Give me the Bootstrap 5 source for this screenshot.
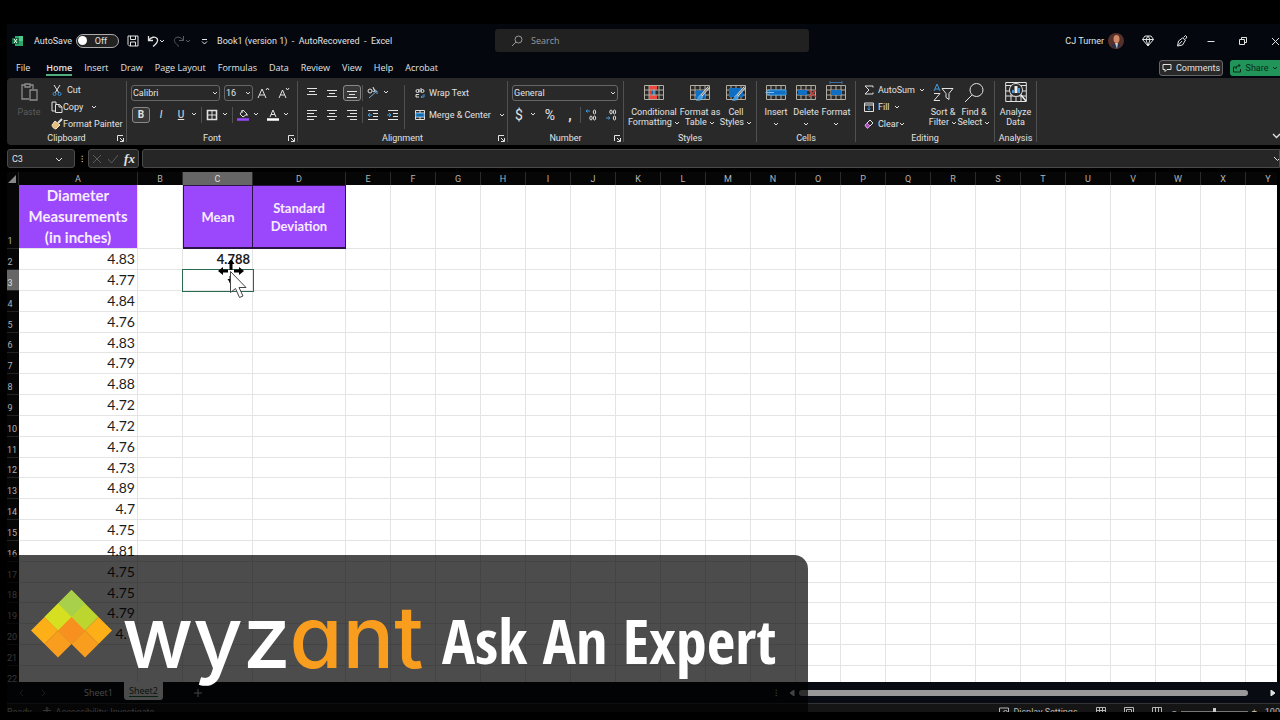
<!DOCTYPE html>
<html lang="en">
<head>
<meta charset="utf-8">
<meta name="viewport" content="width=device-width, initial-scale=1">
<title>Book1 (version 1) - AutoRecovered - Excel</title>
<link href="https://cdn.jsdelivr.net/npm/bootstrap@5.3.0/dist/css/bootstrap.min.css" rel="stylesheet">
<style>
  body{background:#000;color:#e2e2e2;font:400 9px/12px Roboto,"Open Sans",sans-serif;height:100vh;overflow:hidden}
  button,input,select{font:inherit;color:inherit;background:none;border:0;padding:0}
  button{display:inline-flex;align-items:center;justify-content:center;white-space:nowrap}
  svg{fill:none;stroke:currentColor;stroke-width:1;flex:none;display:block}
  svg.flat{stroke:none}
  .i10{width:10px;height:10px}.i12{width:12px;height:12px}.i14{width:14px;height:14px}.i16{width:16px;height:16px}.i22{width:22px;height:22px}
  .caret{width:6px;height:6px}
  .m10{margin-left:10px}.m18{margin-left:18px}.m22{margin-left:22px}
  .app{height:calc(100vh - 8px);padding-top:24px}
  .titlebar{height:33px;background:#04070e;padding-left:5px;margin-left:7px}
  .title-left{width:483px}
  .title-text{white-space:pre}
  .toggle{width:43px;height:14px;border:1px solid #aaa;border-radius:7px;background:#222}
  .toggle::before{content:"";width:9px;height:9px;border-radius:50%;background:#fff;margin:0 8px 0 -10px}
  .search{background:#212121;border-radius:3px;height:23px;width:314px;color:#9a9a9a;font:9px/12px "Open Sans",sans-serif}
  .avatar{width:16px;height:16px}
  .menubar{height:21px;background:#04070e;margin-left:7px;padding-left:9px;font:9px/12px "Open Sans",sans-serif;gap:12px}
  .menubar a{color:inherit;text-decoration:none;line-height:14px}
  .menubar a.on{font-weight:600;border-bottom:2px solid #4fae7b;margin-left:4px;line-height:13px;padding-top:1px}
  .cbtn{height:16px;border:1px solid #666;border-radius:3px;background:#292929;width:64px;font-family:Roboto,sans-serif}
  .sbtn{height:16px;border-radius:3px 0 0 3px;background:#21945a;color:#0a2a18;width:50px;font-family:Roboto,sans-serif;margin-left:7px}
  .ribbon{height:67px;background:#292929;margin-left:7px;border-radius:4px 0 0 4px}
  .grp{position:relative;border-right:1px solid #505050;height:61px;margin-top:3px;flex:none}
  .grp>.cap{position:absolute;bottom:-2px;left:0;right:0;text-align:center}
  .launch{position:absolute;right:2px;bottom:0;width:7px;height:7px}
  .r3{height:17px}.r2{height:22px}
  .ib{width:20px;height:16px;flex:none}
  .ib.sel{width:18px;margin:0 1px;border:1px solid #888;border-radius:3px;background:#383838}
  .glyph{font-size:14px}
  .letter{font-size:10px}
  .vs{width:1px;height:16px;background:#505050;flex:none}
  .align-left-part{width:107px;height:44px;border-right:1px solid #505050}
  .combo{height:16px;border:1px solid #666;border-radius:3px;appearance:none;padding-left:1px;background:#292929 url("data:image/svg+xml,%3Csvg xmlns='http://www.w3.org/2000/svg' width='6' height='6'%3E%3Cpath d='M1 2l2 2 2-2' fill='none' stroke='%23ddd'/%3E%3C/svg%3E") no-repeat right 1px center}
  .big{flex-direction:column;justify-content:flex-start;line-height:10px;flex:none}
  .big svg.i22{margin-bottom:4px}
  .dim{color:#5c5c5c}
  .fbar{height:27px;padding:4px 0 4px 7px}
  .fbox{height:19px;border:1px solid #4a4a4a;border-radius:3px;background:#262626}
  .sheet{margin:0 3px 0 7px;overflow:hidden;min-height:0;background:#fff}
  .gridtab{table-layout:fixed;border-collapse:separate;border-spacing:0;width:1284px;font-family:Lato,"Open Sans",sans-serif;color:#1c1c1c;font-weight:400}
  .gridtab thead th{height:13px;line-height:12px;background:#060606;color:#b4b4b4;font-family:Roboto,sans-serif;font-size:9px;font-weight:400;text-align:center;padding:0;border-right:1px solid #2b2b2b}
  .gridtab tbody th{background:#060606;color:#b0b0b0;font:9px/9px Roboto,sans-serif;text-align:center;vertical-align:bottom;padding:0 6px 2px 0;border-bottom:1px solid #222}
  .gridtab tbody td{background:#fff;border-right:1px solid #e4e4e4;border-bottom:1px solid #e4e4e4;padding:0 2px 0 0;line-height:18px;font-size:14px;text-align:right;overflow:hidden}
  .gridtab tbody tr{height:21px}
  .gridtab tbody tr:nth-child(6n){height:20px}
  .gridtab tbody tr:first-child{height:63px}
  .gridtab thead th.hot,.gridtab tbody th.hot{background:#666;color:#ddd}
  .gridtab tbody td.hd{background:#9b48fc;color:#f6ecff;font-weight:700;text-align:center;padding:0;font-size:13px}
  .gridtab tbody td.first{font-size:15px;line-height:21px}
  .gridtab tbody td.box{border:solid #2b1348;border-width:1px 1px 2px 0}
  .gridtab tbody td.box-start{border-left-width:1px}
  .gridtab tbody td.avg{font-weight:700;font-size:13px}
  .gridtab tbody td.cur{outline:1px solid #2a6b50;outline-offset:0;position:relative;overflow:visible}
  .pointer{position:absolute;left:35px;top:-10px;width:30px;height:40px}
  .sheetbar{height:21px;background:#080b11;margin-left:7px;flex:none}
  .stab{background:#fff;color:#123d28;height:18px;width:39px;border-radius:0 0 3px 3px;margin-left:10px}
  .stab span{border-bottom:1px solid #1e6b45;line-height:11px}
  .sheetbar button{font:9px/12px "Open Sans",sans-serif}
  .hscroll{width:449px;height:6px;border-radius:3px;background:#999}
  .status{height:9px;background:#151515;margin-left:7px;border-top:1px solid #333;flex:none;overflow:hidden;color:#b5b5b5}
  .status>div{height:15px}
  .zoomer{appearance:none;width:67px;height:8px;background:linear-gradient(#777,#777) center/100% 1px no-repeat}
  .zoomer::-webkit-slider-thumb{appearance:none;width:3px;height:8px;background:#ccc}
  .banner{position:absolute;left:0;bottom:0;width:808px;height:165px;background:rgba(0,0,0,.7);border-radius:0 14px 0 0;color:#fff;padding-left:31px}
  .brandmark{width:81px;height:68px;margin-top:35px}
  .wordmark{font:500 86px/84px Inter,sans-serif;font-feature-settings:"cv11";padding-left:10px;width:330px;margin-top:40px}
  .wordmark span{color:#f99d1f}
  .ask{font:700 62px/84px "Open Sans Condensed","Noto Sans Condensed","Roboto Condensed",sans-serif;margin-top:43px}
</style>
</head>
<body>
<svg width="0" height="0" class="position-absolute" aria-hidden="true">
  <symbol id="caret" viewBox="0 0 6 6"><path d="M1 2l2 2 2-2"/></symbol>
  <symbol id="launch" viewBox="0 0 7 7"><path d="M.5 6V.5H6M3 3l3 3M6.500 3v3.500H3"/></symbol>
  <symbol id="left" viewBox="0 0 12 12"><path d="M1 1.500h10M1 4.500h7M1 7.500h10M1 10.500h7"/></symbol>
  <symbol id="center" viewBox="0 0 12 12"><path d="M1 1.500h10M3 4.500h6M1 7.500h10M3 10.500h6"/></symbol>
  <symbol id="right" viewBox="0 0 12 12"><path d="M1 1.500h10M4 4.500h7M1 7.500h10M4 10.500h7"/></symbol>
  <symbol id="table" viewBox="0 0 22 22"><path d="M1.500 4.500h19v14h-19zM1.500 9h19M1.500 14h19M6 4.500v14M11 4.500v14M16 4.500v14" stroke="#b5afa3"/></symbol>
  <symbol id="brush" viewBox="0 0 22 22"><path d="M20 6l-8 9" stroke="#e8e4da" stroke-width="2.500"/><path d="M20 6l-8 9" stroke="#555"/><path d="M12 14c-3 0-2 4-5 5 3 1 7 0 6-4z" fill="#3d9be0" stroke="#8cc8f2" stroke-width=".6"/></symbol>
</svg>

<div class="app d-flex flex-column overflow-hidden">
  <header class="titlebar d-flex align-items-center flex-shrink-0">
    <div class="title-left d-flex align-items-center flex-shrink-0">
      <svg class="i12 flat" viewBox="0 0 12 12"><path d="M3 1h8v10H3z" fill="#2fa56c"/><path d="M7 1h4v5H7z" fill="#54c78e"/><path d="M0 3h7v6H0z" fill="#0f6b3d"/><path d="M2 4l3 4M5 4L2 8" stroke="#fff"/></svg>
      <label for="autosave" class="m10 me-1">AutoSave</label>
      <button id="autosave" class="toggle">Off</button>
      <button class="ms-2" aria-label="Save"><svg class="i12" viewBox="0 0 12 12"><path d="M1 1h10v10H2.500L1 9.500zM3.500 1v3.500h5V1M3.500 11V7h5v4"/></svg></button>
      <button class="ms-2" aria-label="Undo"><svg class="i12" viewBox="0 0 12 12"><path d="M1.500 1v4.500H6M1.500 5.500C4 2 8 1 10 3.500S9 9 6 11.500" stroke-width="1.300"/></svg><svg class="caret"><use href="#caret"/></svg></button>
      <button class="ms-2 dim" aria-label="Redo"><svg class="i12" viewBox="0 0 12 12"><path d="M10.500 1v4.500H6M10.500 5.500C8 2 4 1 2 3.500S3 9 6 11.500"/></svg><svg class="caret"><use href="#caret"/></svg></button>
      <button class="ms-2" aria-label="Customize"><svg class="i10" viewBox="0 0 10 10"><path d="M3 3.500h5M3 5.500l2.500 2.500L8 5.500"/></svg></button>
      <span class="ms-2 title-text">Book1 (version 1)  -  AutoRecovered  -  Excel</span>
    </div>
    <label class="search d-flex align-items-center"><svg class="i12 mx-2 ms-3" viewBox="0 0 12 12"><circle cx="7.500" cy="4.500" r="3.500"/><path d="M5 7l-4 4"/></svg><input class="w-100" value="Search" aria-label="Search"></label>
    <div class="ms-auto d-flex align-items-center flex-shrink-0">
      <span>CJ Turner</span>
      <svg class="avatar ms-1 flat" viewBox="0 0 16 16"><circle cx="8" cy="8" r="8" fill="#56302a"/><path d="M3 13c2-3 8-3 10 0a8 8 0 0 1-10 0z" fill="#26324f"/><path d="M7 10h3l-1 6z" fill="#ccc"/><ellipse cx="8.500" cy="6" rx="3" ry="4" fill="#d08a68"/></svg>
      <button class="m18" aria-label="Premium"><svg class="i12" viewBox="0 0 12 12"><path d="M3 1h6l2.500 3.500L6 11 .5 4.500zM.5 4.500h11M4 4.500L6 11l2-6.500L6 1 4 4.500"/></svg></button>
      <button class="m22" aria-label="Pen"><svg class="i12" viewBox="0 0 12 12"><path d="M1.500 11l1-5 4-3 3 2-3 5zM2 10.500L6 6M7.500 2.500l2-2 1.500 1.500-1.500 2"/></svg></button>
      <button class="m18" aria-label="Minimize"><svg class="i10" viewBox="0 0 10 10"><path d="M1.500 5.500h7"/></svg></button>
      <button class="m22" aria-label="Restore"><svg class="i10" viewBox="0 0 10 10"><path d="M1.500 3.500h5v5h-5zM3.500 3V1.500h5v5H7"/></svg></button>
      <button class="m22" aria-label="Close"><svg class="i10" viewBox="0 0 10 10"><path d="M2 2l7 7M9 2L2 9"/></svg></button>
    </div>
  </header>

  <nav class="menubar d-flex align-items-center flex-shrink-0">
    <a href="#">File</a><a href="#" class="on">Home</a><a href="#">Insert</a><a href="#">Draw</a><a href="#">Page Layout</a><a href="#">Formulas</a><a href="#">Data</a><a href="#">Review</a><a href="#">View</a><a href="#">Help</a><a href="#">Acrobat</a>
    <div class="ms-auto d-flex">
      <button class="cbtn"><svg class="i10 me-1" viewBox="0 0 10 10"><path d="M1 1.500h8v5H5L3 8.500v-2H1z"/></svg>Comments</button>
      <button class="sbtn"><svg class="i10 me-1" viewBox="0 0 10 10"><path d="M5 4H1.500v5h7V6M4 6c0-3 2-3.500 4-3.500M6.500 1L8 2.500 6.500 4"/></svg>Share<svg class="caret ms-1"><use href="#caret"/></svg></button>
    </div>
  </nav>

  <div class="ribbon d-flex flex-shrink-0">
    <section class="grp d-flex" style="width:120px">
      <button class="big dim" style="width:44px"><svg class="i22" viewBox="0 0 22 22"><path d="M7 4H4v14h7M15 8V4h-3M7 3h5v3H7zM12 9h7v10h-7z" stroke="#8d8d8d" stroke-width="1.300"/></svg><span>Paste</span></button>
      <div>
        <div class="r3 d-flex align-items-center"><button><svg class="i12 me-1" viewBox="0 0 12 12"><path d="M3 1l5 8M9 1L4 9"/><circle cx="3.500" cy="10" r="1.500" stroke="#3f8fd0"/><circle cx="8.500" cy="10" r="1.500" stroke="#3f8fd0"/></svg>Cut</button></div>
        <div class="r3 d-flex align-items-center"><button><svg class="i12" viewBox="0 0 12 12"><path d="M4 10H1V1h4v2M4.500 3.500h4l2.500 2.500v5.500H4.500zM8 3.500V6h3"/></svg>Copy<svg class="caret ms-2"><use href="#caret"/></svg></button></div>
        <div class="r3 d-flex align-items-center"><button><svg class="i12" viewBox="0 0 12 12"><path d="M11 1L7 5" stroke-width="2"/><path d="M4 3l5 4-4 4c-2 0-4-2-4-4z" fill="#e4c07b" stroke="#f4e4c0"/></svg>Format Painter</button></div>
      </div>
      <span class="cap">Clipboard</span><svg class="launch"><use href="#launch"/></svg>
    </section>

    <section class="grp ps-1 pt-1" style="width:171px">
      <div class="r2 d-flex align-items-start">
        <select class="combo" style="width:89px" aria-label="Font"><option>Calibri</option></select>
        <select class="combo ms-1" style="width:29px" aria-label="Size"><option>16</option></select>
        <button class="ib" aria-label="Grow"><svg class="i14" viewBox="0 0 14 14"><path d="M2 12L6 3l4 9M3.500 9h5M10 4l1.500-2L13 4"/></svg></button>
        <button class="ib" aria-label="Shrink"><svg class="i14" viewBox="0 0 14 14"><path d="M3 12l3.500-8L10 12M4.500 9h4M10 2l1.500 2L13 2"/></svg></button>
      </div>
      <div class="r2 d-flex align-items-start">
        <button class="ib sel fw-bold letter">B</button><button class="ib fst-italic letter">I</button><button class="ib text-decoration-underline letter">U</button>
        <svg class="caret mt-1"><use href="#caret"/></svg><span class="vs ms-1"></span>
        <button class="ib" aria-label="Borders"><svg class="i12" viewBox="0 0 12 12"><path d="M1.500 1.500h9v9h-9z" stroke-width="1.600"/><path d="M6 1v10M1 6h10"/></svg></button><svg class="caret mt-1"><use href="#caret"/></svg><span class="vs ms-1"></span>
        <button class="ib" aria-label="Fill colour"><svg class="i12" viewBox="0 0 12 12"><path d="M6 1l4 4-4 3-3-3zM5 1v3M10 5v2"/><path d="M0 10.500h12" stroke="#9b48fc" stroke-width="2.500"/></svg></button><svg class="caret mt-1"><use href="#caret"/></svg>
        <button class="ib ms-1" aria-label="Font colour"><svg class="i12" viewBox="0 0 12 12"><path d="M3 8l3-7 3 7M4 5.500h4"/><path d="M0 10.500h12" stroke="#fff" stroke-width="2.500"/></svg></button><svg class="caret mt-1"><use href="#caret"/></svg>
      </div>
      <span class="cap">Font</span><svg class="launch"><use href="#launch"/></svg>
    </section>

    <section class="grp d-flex pt-1" style="width:210px">
      <div class="align-left-part">
        <div class="r2 d-flex align-items-start ps-1">
          <button class="ib" aria-label="Top"><svg class="i12" viewBox="0 0 12 12"><path d="M1 1.500h10M3 4.500h6M1 7.500h10"/></svg></button>
          <button class="ib" aria-label="Middle"><svg class="i12" viewBox="0 0 12 12"><path d="M1 3.500h10M3 6.500h6M1 9.500h10"/></svg></button>
          <button class="ib sel" aria-label="Bottom"><svg class="i12" viewBox="0 0 12 12"><path d="M1 4.500h10M3 7.500h6M1 10.500h10"/></svg></button>
          <span class="vs"></span>
          <button class="ib" aria-label="Orientation"><svg class="i14" viewBox="0 0 14 14"><circle cx="4" cy="5" r="2"/><path d="M7 1l2 5M6.500 5c2 2 4-1 1.500-2"/><path d="M3 12l8-7M8 5h3v3" stroke="#7aa8cc"/></svg></button><svg class="caret mt-1"><use href="#caret"/></svg>
        </div>
        <div class="r2 d-flex align-items-start ps-1">
          <button class="ib" aria-label="Align left"><svg class="i12"><use href="#left"/></svg></button>
          <button class="ib" aria-label="Align center"><svg class="i12"><use href="#center"/></svg></button>
          <button class="ib" aria-label="Align right"><svg class="i12"><use href="#right"/></svg></button>
          <span class="vs"></span>
          <button class="ib" aria-label="Outdent"><svg class="i12" viewBox="0 0 12 12"><path d="M1 1.500h10M6 4.500h5M6 7.500h5M1 10.500h10"/><path d="M5 6H1M3 4L1 6l2 2" stroke="#3f9be0"/></svg></button>
          <button class="ib" aria-label="Indent"><svg class="i12" viewBox="0 0 12 12"><path d="M1 1.500h10M6 4.500h5M6 7.500h5M1 10.500h10"/><path d="M0 6h4M2 4l2 2-2 2" stroke="#3f9be0"/></svg></button>
        </div>
      </div>
      <div class="m10">
        <div class="r2 d-flex align-items-start"><button class="ib w-auto"><svg class="i10 me-1" viewBox="0 0 10 10"><circle cx="2.500" cy="3" r="1.500"/><path d="M4 1v3.500M6 0v4.500M4 9H1V6.500h3"/><circle cx="7.500" cy="3" r="1.500"/><path d="M6 9h3V6M7.500 7.500L6 9l1.500 1.500" stroke="#3f9be0"/></svg>Wrap Text</button></div>
        <div class="r2 d-flex align-items-start"><button class="ib w-auto"><svg class="i10 me-1" viewBox="0 0 10 10"><path d="M.5.500h9v9h-9zM.5 3h9M.5 7h9M5 0v3M5 7v3"/><path d="M1 3.500h8v3H1z" fill="#1668a8" stroke="#3f9be0"/></svg>Merge &amp; Center<svg class="caret ms-2"><use href="#caret"/></svg></button></div>
      </div>
      <span class="cap">Alignment</span><svg class="launch"><use href="#launch"/></svg>
    </section>

    <section class="grp pt-1 ps-1" style="width:116px">
      <div class="r2 d-flex align-items-start"><select class="combo" style="width:106px" aria-label="Number format"><option>General</option></select></div>
      <div class="r2 d-flex align-items-start">
        <button class="ib glyph" style="width:14px">$</button><svg class="caret mt-1 ms-1"><use href="#caret"/></svg>
        <button class="ib glyph ms-1">%</button><button class="ib glyph fw-bold">,</button><span class="vs"></span>
        <button class="ib" aria-label="More decimals"><svg class="i12" viewBox="0 0 12 12"><path d="M5 2H1M2.500.500L1 2l1.500 1.500" stroke="#3f9be0"/><ellipse cx="9.500" cy="3" rx="1.200" ry="2"/><ellipse cx="6" cy="9" rx="1.200" ry="2"/><ellipse cx="9.500" cy="9" rx="1.200" ry="2"/></svg></button>
        <button class="ib" aria-label="Fewer decimals"><svg class="i12" viewBox="0 0 12 12"><path d="M1 9h4M3.500 7.500L5 9l-1.500 1.500" stroke="#3f9be0"/><ellipse cx="9.500" cy="3" rx="1.200" ry="2"/><ellipse cx="6" cy="3" rx="1.200" ry="2"/><ellipse cx="9.500" cy="9" rx="1.200" ry="2"/></svg></button>
      </div>
      <span class="cap">Number</span><svg class="launch"><use href="#launch"/></svg>
    </section>

    <section class="grp d-flex ps-1" style="width:133px">
      <button class="big" style="width:52px"><svg class="i22" viewBox="0 0 22 22"><path d="M6 5h8v4H6zM6 14h8v4H6zM6 9h3v5H6z" fill="#e0362c" stroke="none"/><path d="M9 9h4v5H9z" fill="#1668a8" stroke="none"/><use href="#table"/><path d="M7 5h7v3H7zM7 15h7v3H7z" fill="#f0483c" stroke="none"/></svg><span>Conditional</span><span>Formatting <svg class="caret d-inline-block"><use href="#caret"/></svg></span></button>
      <button class="big" style="width:40px"><svg class="i22" viewBox="0 0 22 22"><use href="#table"/><path d="M7 9.500h9v8H7z" fill="#0f6fc4" stroke="none"/><use href="#brush"/></svg><span>Format as</span><span>Table <svg class="caret d-inline-block"><use href="#caret"/></svg></span></button>
      <button class="big" style="width:32px"><svg class="i22" viewBox="0 0 22 22"><use href="#table"/><path d="M4 7h14v9H4z" fill="#0f6fc4" stroke="none"/><use href="#brush"/></svg><span>Cell</span><span>Styles <svg class="caret d-inline-block"><use href="#caret"/></svg></span></button>
      <span class="cap">Styles</span>
    </section>

    <section class="grp d-flex ps-1" style="width:99px">
      <button class="big" style="width:30px"><svg class="i22" viewBox="0 0 22 22"><use href="#table"/><path d="M4 9h17v5H4z" fill="#0f6fc4" stroke="#3f9be0"/><path d="M1 11.500h8M4 8.500l-3 3 3 3" stroke="#7cc4ff"/></svg><span>Insert</span><svg class="caret mt-1"><use href="#caret"/></svg></button>
      <button class="big" style="width:30px"><svg class="i22" viewBox="0 0 22 22"><use href="#table"/><path d="M3 9h9v5H3z" fill="#0f6fc4" stroke="none"/><path d="M14 9l7 7M21 9l-7 7" stroke="#c8403a" stroke-width="1.500"/></svg><span>Delete</span><svg class="caret mt-1"><use href="#caret"/></svg></button>
      <button class="big" style="width:30px"><svg class="i22" viewBox="0 0 22 22"><use href="#table"/><path d="M6 9h10v5H6z" fill="#0f6fc4" stroke="none"/><path d="M5 1.500h12M5 0v3M17 0v3" stroke="#3f6f9f"/></svg><span>Format</span><svg class="caret mt-1"><use href="#caret"/></svg></button>
      <span class="cap">Cells</span>
    </section>

    <section class="grp d-flex ps-2" style="width:139px">
      <div style="width:63px">
        <div class="r3 d-flex align-items-center"><button><svg class="i10 me-1" viewBox="0 0 10 10"><path d="M9 2.500V1H1l4 4-4 4h8V7.500"/></svg>AutoSum<svg class="caret ms-1"><use href="#caret"/></svg></button></div>
        <div class="r3 d-flex align-items-center"><button><svg class="i10 me-1" viewBox="0 0 10 10"><path d="M.5 1h9v8.500h-9zM.5 3h9"/><path d="M5 4v4M3.500 6.500L5 8l1.500-1.500" stroke="#3f9be0"/></svg>Fill<svg class="caret ms-1"><use href="#caret"/></svg></button></div>
        <div class="r3 d-flex align-items-center"><button><svg class="i10 me-1" viewBox="0 0 10 10"><path d="M1 6l5-5 3 3-5 5H3z"/><path d="M3 4l3 3-2 2H3L1 6z" fill="#a64fb5" stroke="#d68ae0"/></svg>Clear<svg class="caret"><use href="#caret"/></svg></button></div>
      </div>
      <button class="big" style="width:32px"><svg class="i22" viewBox="0 0 22 22"><path d="M2 10l3-7 3 7M3 8h4" stroke="#3f9be0"/><path d="M2 12.500h6L2 19.500h6M10 7.500h11l-4 5v6l-3-2v-4z"/></svg><span>Sort &amp;</span><span>Filter <svg class="caret d-inline-block"><use href="#caret"/></svg></span></button>
      <button class="big" style="width:30px"><svg class="i22" viewBox="0 0 22 22"><circle cx="13.500" cy="9" r="6.500"/><path d="M9 14l-7 7"/></svg><span>Find &amp;</span><span>Select <svg class="caret d-inline-block"><use href="#caret"/></svg></span></button>
      <span class="cap">Editing</span>
    </section>

    <section class="grp d-flex" style="width:42px">
      <button class="big w-100"><svg class="i22" viewBox="0 0 22 22"><path d="M.7 1.500h20.600v19H.7zM.7 4.500h20.600M.7 10h20.600M.7 15h20.600M6 4v16M11 15v5M16 4v16"/><circle cx="11" cy="9" r="6.500" fill="#292929" stroke="#ddd"/><path d="M8 9v3M14 7v5" stroke="#3f9be0" stroke-width="2"/><path d="M11 5v7" stroke="#eee" stroke-width="3"/><path d="M16 14l5 6" stroke="#eee" stroke-width="1.500"/></svg><span>Analyze</span><span>Data</span></button>
      <span class="cap">Analysis</span>
    </section>
    <button class="ms-auto align-self-end pb-1" aria-label="Collapse ribbon"><svg class="i10" viewBox="0 0 10 10"><path d="M3 3l3.500 3.500L10 3" stroke-width="1.300"/></svg></button>
  </div>

  <div class="fbar d-flex flex-shrink-0 align-items-center">
    <div class="fbox d-flex align-items-center" style="width:68px"><input class="ps-1" style="width:46px" value="C3" aria-label="Name box"><svg class="i10" viewBox="0 0 10 10"><path d="M2 4l3 3 3-3"/></svg></div>
    <span class="text-center" style="width:13px">⁝</span>
    <div class="fbox d-flex align-items-center justify-content-around" style="width:51px">
      <button class="dim" aria-label="Cancel"><svg class="i10" viewBox="0 0 10 10"><path d="M1 1l8 8M9 1L1 9"/></svg></button>
      <button class="dim" aria-label="Enter"><svg class="i10" viewBox="0 0 10 10"><path d="M0 5l3.500 4L10 1"/></svg></button>
      <button style="font:italic 700 13px/14px 'Liberation Serif',serif">fx</button>
    </div>
    <div class="fbox flex-grow-1 d-flex align-items-center rounded-end-0" style="margin-left:3px"><input class="flex-grow-1" aria-label="Formula"><svg class="i10" viewBox="0 0 10 10"><path d="M5 3l3.500 3.500L12 3"/></svg></div>
  </div>

  <main class="sheet flex-grow-1">
    <table class="gridtab"><colgroup id="cols"></colgroup><thead id="head"></thead><tbody id="rows"></tbody></table>
  </main>

  <div class="sheetbar d-flex align-items-center">
    <svg class="i10 dim m10" viewBox="0 0 10 10"><path d="M6 2L3 5l3 3"/></svg>
    <svg class="i10 dim m10" viewBox="0 0 10 10"><path d="M5 2l3 3-3 3"/></svg>
    <button style="margin-left:36px;width:31px">Sheet1</button>
    <button class="stab align-self-start"><span>Sheet2</span></button>
    <button style="margin-left:30px" aria-label="New sheet"><svg class="i10" viewBox="0 0 10 10"><path d="M5 1v8M1 5h8"/></svg></button>
    <div class="ms-auto d-flex align-items-center">
      <span class="m10 me-2">⁝</span>
      <svg class="caret me-1 ms-1" viewBox="0 0 6 6"><path d="M5 0v6L1 3z" fill="currentColor"/></svg>
      <div class="hscroll"></div>
      <svg class="caret m22 me-1" viewBox="0 0 6 6"><path d="M1 0v6l4-3z" fill="currentColor"/></svg>
    </div>
  </div>
  <footer class="status"><div class="d-flex align-items-center">
    <span>Ready</span>
    <svg class="i10 m10 me-1" viewBox="0 0 10 10"><circle cx="5" cy="1.500" r="1"/><path d="M1 3.500h8M5 3.500V6L3 9M5 6l2 3"/></svg><span>Accessibility: Investigate</span>
    <div class="ms-auto d-flex align-items-center text-nowrap">
      <svg class="i10 me-1" viewBox="0 0 10 10"><path d="M9.500 5V1H.5v7H4"/><circle cx="6.500" cy="5.500" r="2"/></svg><span>Display Settings</span>
      <svg class="i10 m18" viewBox="0 0 10 10"><path d="M.5.500h9v9h-9zM.5 3.500h9M.5 6.500h9M3.500.500v9M6.500.500v9"/></svg>
      <svg class="i10 m18" viewBox="0 0 10 10"><path d="M.5.500h9v9h-9zM2.500 2.500h5v7M2.500 2.500v7M4 5h2"/></svg>
      <svg class="i10 m18" viewBox="0 0 10 10"><path d="M.5.500h9v9h-9zM3.500.500v6M6.500.500v6M.5 6.500h6"/></svg>
      <span class="m10">−</span><input type="range" class="zoomer mx-1" aria-label="Zoom"><span>+</span>
      <span class="ms-2">100</span>
    </div>
  </div></footer>
</div>

<aside class="banner d-flex">
  <svg class="brandmark flat" viewBox="0 0 81 68">
    <path d="M40.500 0L67.500 27 40.500 54 13.500 27z" fill="#bdd62f"/><path d="M40.500 0L54 13.500 40.500 27 27 13.500z" fill="#a8d04a"/><path d="M27 13.500L40.500 27 27 40.500 13.500 27z" fill="#d6e021"/>
    <path d="M13.500 27L27 40.500 13.500 54 0 40.500zM67.500 27L81 40.500 67.500 54 54 40.500z" fill="#fcaf17"/><path d="M27 40.500L40.500 54 27 67.500 13.500 54zM54 40.500L67.500 54 54 67.500 40.500 54z" fill="#f99d1f"/><path d="M40.500 27L54 40.500 40.500 54 27 40.500z" fill="#f7901e"/>
  </svg>
  <div class="wordmark">wyz<span>ant</span></div>
  <div class="ask text-nowrap">Ask An Expert</div>
</aside>

<script>
  const letters = 'ABCDEFGHIJKLMNOPQRSTUVWXY'.split('');
  const widths = {A:119, B:45, C:70, D:93};
  const data = [4.83,4.77,4.84,4.76,4.83,4.79,4.88,4.72,4.72,4.76,4.73,4.89,4.7,4.75,4.81,4.75,4.75,4.79,4.9];
  cols.innerHTML = '<col style="width:12px">' + letters.map(l => `<col style="width:${widths[l] || 45}px">`).join('');
  head.innerHTML = '<tr><th><svg class="i10 flat" viewBox="0 0 10 10"><path d="M9 1v8H1z" fill="#888"/></svg></th>' + letters.map(l => `<th class="${l === 'C' ? 'hot' : ''}">${l}</th>`).join('') + '</tr>';
  const pointer = '<svg class="pointer" viewBox="0 0 30 40"><path d="M13 1v9M13 16v7M3 11h7M16 11h7" stroke="#000" stroke-width="3"/><path d="M9.500 4L13-1l3.500 5zM5 7l-5 4 5 4zM21 7l5 4-5 4zM9.500 19l3.500 5 3.500-5z" fill="#000" stroke="none"/><path d="M12.500 11.500v21l5-4 4 9 3.500-1.500-4-8.500h7z" fill="#fff" stroke="#444"/></svg>';
  const special = {
    A1:['hd first','Diameter Measurements (in inches)'], C1:['hd box box-start','Mean'],
    D1:['hd box','Standard Deviation'], C2:['avg','4.788'], C3:['cur',pointer]
  };
  let html = '';
  for (let r = 1; r <= 22; r++) {
    html += `<tr><th class="${r === 3 ? 'hot' : ''}">${r}</th>`;
    for (const l of letters) {
      const s = special[l + r];
      html += s ? `<td class="${s[0]}">${s[1]}</td>` : `<td>${l === 'A' && data[r - 2] !== undefined ? data[r - 2] : ''}</td>`;
    }
    html += '</tr>';
  }
  rows.innerHTML = html;
</script>
<script src="https://cdn.jsdelivr.net/npm/bootstrap@5.3.0/dist/js/bootstrap.bundle.min.js"></script>
</body>
</html>
